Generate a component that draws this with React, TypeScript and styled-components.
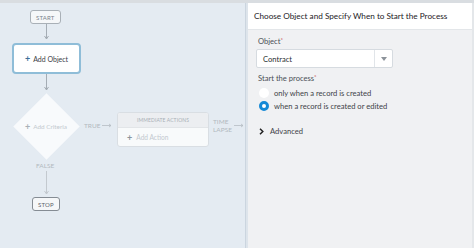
import React from "react";
import styled, { createGlobalStyle } from "styled-components";

const Global = createGlobalStyle`
  html, body { margin: 0; padding: 0; }
  body { width: 474px; height: 248px; overflow: hidden; font-family: "Lato", "Open Sans", sans-serif; }
  #root { width: 474px; height: 248px; }
`;

const Frame = styled.div`
  width: 474px;
  height: 248px;
  display: flex;
  flex-direction: column;
  background: #e4ebf2;
`;

const TopStrip = styled.div`
  height: 3px;
  background: #d9dde1;
  flex: none;
`;

const Main = styled.div`
  flex: 1;
  display: flex;
  min-height: 0;
`;

const Canvas = styled.div`
  position: relative;
  width: 245px;
  flex: none;
  background: #e4ebf2;
  border-right: 1px solid #cbd5df;
`;

const Panel = styled.div`
  flex: 1;
  display: flex;
  flex-direction: column;
  background: #f0f1f3;
  border-left: 2px solid #dde4eb;
  border-right: 2px solid #e4e7ea;
`;

const PanelHeader = styled.div`
  height: 26px;
  background: #ffffff;
  display: flex;
  align-items: center;
  padding-left: 6px;
  font-size: 8.2px;
  color: #1e2226;
  border-bottom: 1px solid #e3e6e9;
`;

const PanelBody = styled.div`
  padding: 6px 8px 0 8px;
  display: flex;
  flex-direction: column;
`;

const Label = styled.div`
  font-size: 7.6px;
  color: #4a4f55;
  margin-left: 2px;
  margin-bottom: 3px;
  span { color: #c23934; font-size: 6px; vertical-align: top; }
`;

const Select = styled.div`
  width: 135px;
  height: 17px;
  background: #ffffff;
  border: 1px solid #d6dbe0;
  border-radius: 2px;
  display: flex;
  align-items: center;
  font-size: 7.6px;
  color: #2b2f33;
  margin-bottom: 5px;
`;

const SelectText = styled.div`
  flex: 1;
  padding-left: 6px;
`;

const SelectArrow = styled.div`
  width: 17px;
  height: 100%;
  border-left: 1px solid #e1e5e9;
  display: flex;
  align-items: center;
  justify-content: center;
`;

const RadioRow = styled.div`
  display: flex;
  align-items: center;
  height: 13px;
  font-size: 7.6px;
  color: #3e4348;
  gap: 5px;
  margin-left: 3px;
`;

const Radio = styled.div<{ $on?: boolean }>`
  width: 10px;
  height: 10px;
  border-radius: 50%;
  box-sizing: border-box;
  background: #ffffff;
  border: ${(p) => (p.$on ? "3px solid #1589d6" : "none")};
`;

const Advanced = styled.div`
  display: flex;
  align-items: center;
  gap: 6px;
  font-size: 7.6px;
  color: #3e4348;
  margin-top: 14px;
  margin-left: 3px;
`;

const Node = styled.div<{ $x: number; $y: number }>`
  position: absolute;
  left: ${(p) => p.$x}px;
  top: ${(p) => p.$y}px;
`;

const Terminal = styled.div<{ $dark?: boolean }>`
  box-sizing: border-box;
  height: 14px;
  padding: 0 5px;
  display: flex;
  align-items: center;
  justify-content: center;
  font-size: 6px;
  letter-spacing: 0.2px;
  color: ${(p) => (p.$dark ? "#5c636b" : "#7b838c")};
  background: #f5f7f9;
  border: 1.5px solid ${(p) => (p.$dark ? "#858c94" : "#a9b0b7")};
  border-radius: 3px;
`;

const ObjectBox = styled.div`
  box-sizing: border-box;
  width: 69px;
  height: 31px;
  background: #ffffff;
  border: 2px solid #8fbdd8;
  border-radius: 4px;
  display: flex;
  align-items: center;
  justify-content: center;
  gap: 3px;
  font-size: 7px;
  color: #3b4046;
`;

const Plus = styled.span<{ $c: string; $s: number }>`
  color: ${(p) => p.$c};
  font-size: ${(p) => p.$s}px;
  font-weight: 700;
  line-height: 1;
`;

const Diamond = styled.div`
  width: 66px;
  height: 66px;
  position: relative;
  display: flex;
  align-items: center;
  justify-content: center;
  &::before {
    content: "";
    position: absolute;
    left: 9.5px;
    top: 9.5px;
    width: 47px;
    height: 47px;
    background: #f8fafc;
    transform: rotate(45deg);
  }
`;

const DiamondText = styled.div`
  position: relative;
  display: flex;
  align-items: center;
  gap: 3px;
  font-size: 6.4px;
  color: #c3c9cf;
`;

const EdgeLabel = styled.div`
  font-size: 6.5px;
  color: #b2b9c0;
  line-height: 7.5px;
  display: flex;
  align-items: center;
  gap: 2px;
`;

const ActionBox = styled.div`
  box-sizing: border-box;
  width: 92px;
  height: 35px;
  border: 1px solid #d9dee3;
  border-radius: 3px;
  background: #f8fafb;
  display: flex;
  flex-direction: column;
  overflow: hidden;
`;

const ActionHead = styled.div`
  height: 14px;
  background: #eceef1;
  border-bottom: 1px solid #e2e5e8;
  display: flex;
  align-items: center;
  justify-content: center;
  font-size: 5px;
  color: #a9afb5;
  letter-spacing: 0.1px;
`;

const ActionBody = styled.div`
  flex: 1;
  display: flex;
  align-items: center;
  padding-left: 9px;
  gap: 4px;
  font-size: 6.6px;
  color: #c3c9cf;
`;

const Wire = styled.svg`
  position: absolute;
  left: 0;
  top: 0;
  overflow: visible;
`;

function VArrow({ x, y1, y2, c }: { x: number; y1: number; y2: number; c: string }) {
  return (
    <Wire width="245" height="245">
      <line x1={x} y1={y1} x2={x} y2={y2} stroke={c} strokeWidth="1" />
      <path d={`M${x - 2} ${y2 - 3} L${x} ${y2} L${x + 2} ${y2 - 3}`} stroke={c} fill="none" strokeWidth="1" />
    </Wire>
  );
}

function HArrowSvg() {
  return (
    <svg width="10" height="5" viewBox="0 0 10 5">
      <line x1="0" y1="2.5" x2="9" y2="2.5" stroke="#b5bcc3" strokeWidth="0.8" />
      <path d="M7 1 L9 2.5 L7 4" stroke="#b5bcc3" fill="none" strokeWidth="0.8" />
    </svg>
  );
}

export default function App() {
  return (
    <>
      <Global />
      <Frame>
        <TopStrip />
        <Main>
          <Canvas>
            <VArrow x={46.5} y1={21} y2={36} c="#a4acb4" />
            <VArrow x={46.5} y1={71} y2={87} c="#a4acb4" />
            <VArrow x={46.5} y1={168} y2={191} c="#c3c9cf" />
            <Node $x={30} $y={7}>
              <Terminal>START</Terminal>
            </Node>
            <Node $x={12} $y={40}>
              <ObjectBox>
                <Plus $c="#3d6e99" $s={9}>+</Plus>
                Add Object
              </ObjectBox>
            </Node>
            <Node $x={13} $y={90}>
              <Diamond>
                <DiamondText>
                  <Plus $c="#a9b0b7" $s={9}>+</Plus>
                  Add Criteria
                </DiamondText>
              </Diamond>
            </Node>
            <Node $x={84} $y={119}>
              <EdgeLabel>
                TRUE <HArrowSvg />
              </EdgeLabel>
            </Node>
            <Node $x={117} $y={109}>
              <ActionBox>
                <ActionHead>IMMEDIATE ACTIONS</ActionHead>
                <ActionBody>
                  <Plus $c="#8c949c" $s={9}>+</Plus>
                  Add Action
                </ActionBody>
              </ActionBox>
            </Node>
            <Node $x={213} $y={115}>
              <EdgeLabel>
                <span>
                  TIME
                  <br />
                  LAPSE
                </span>
                <HArrowSvg />
              </EdgeLabel>
            </Node>
            <Node $x={36} $y={159}>
              <EdgeLabel>FALSE</EdgeLabel>
            </Node>
            <Node $x={32} $y={194}>
              <Terminal $dark>STOP</Terminal>
            </Node>
          </Canvas>
          <Panel>
            <PanelHeader>Choose Object and Specify When to Start the Process</PanelHeader>
            <PanelBody>
              <Label>
                Object<span>*</span>
              </Label>
              <Select>
                <SelectText>Contract</SelectText>
                <SelectArrow>
                  <svg width="6" height="4" viewBox="0 0 6 4">
                    <path d="M0 0 L6 0 L3 4 Z" fill="#8c939a" />
                  </svg>
                </SelectArrow>
              </Select>
              <Label>
                Start the process<span>*</span>
              </Label>
              <RadioRow>
                <Radio />
                only when a record is created
              </RadioRow>
              <RadioRow>
                <Radio $on />
                when a record is created or edited
              </RadioRow>
              <Advanced>
                <svg width="5" height="7" viewBox="0 0 5 7">
                  <path d="M1 0.8 L3.8 3.5 L1 6.2" stroke="#222" strokeWidth="1.5" fill="none" />
                </svg>
                Advanced
              </Advanced>
            </PanelBody>
          </Panel>
        </Main>
      </Frame>
    </>
  );
}
